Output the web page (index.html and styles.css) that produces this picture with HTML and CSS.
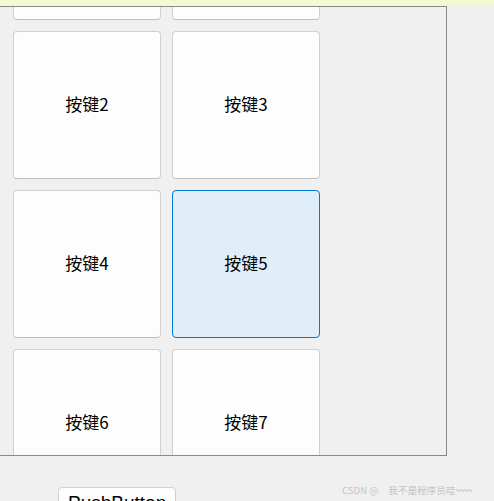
FILE: index.html
```html
<!DOCTYPE html>
<html lang="zh-CN">
<head>
<meta charset="utf-8">
<title>Buttons</title>
<link rel="stylesheet" href="styles.css">
</head>
<body>
<div class="topbar"></div>
<div class="frame">
  <div class="grid">
    <button class="key">按键0</button>
    <button class="key">按键1</button>
    <button class="key">按键2</button>
    <button class="key">按键3</button>
    <button class="key">按键4</button>
    <button class="key hover">按键5</button>
    <button class="key">按键6</button>
    <button class="key">按键7</button>
  </div>
</div>
<div class="footer">
  <button class="push">PushButton</button>
</div>
<div class="watermark"><span class="wm-site">CSDN @</span><span>我不是程序员哇<span class="wm-tilde">~~~~</span></span></div>
</body>
</html>
```
FILE: styles.css
```css
html, body {
  margin: 0;
  padding: 0;
}
body {
  width: 494px;
  height: 501px;
  overflow: hidden;
  background: #f0f0f0;
  position: relative;
  font-family: "Noto Sans CJK SC", "Noto Sans", sans-serif;
}
.topbar {
  height: 6px;
  background: #f4f8d3;
}
.frame {
  width: 446px;
  height: 448px;
  border-top: 1px solid #8a8a8a;
  border-right: 1px solid #8a8a8a;
  border-bottom: 1px solid #8a8a8a;
  overflow: hidden;
  box-sizing: content-box;
}
.grid {
  margin-top: -135px;
  padding-left: 13px;
  display: grid;
  grid-template-columns: 148px 148px;
  grid-auto-rows: 148px;
  gap: 11px;
}
.key {
  box-sizing: border-box;
  width: 148px;
  height: 148px;
  margin: 0;
  padding: 0 0 3px 0;
  background: #fdfdfd;
  border: 1px solid #d0d0d0;
  border-bottom-color: #bfbfbf;
  border-radius: 4px;
  font-family: "Noto Sans CJK SC", "Noto Sans", sans-serif;
  font-size: 17px;
  color: #000;
  display: flex;
  align-items: center;
  justify-content: center;
}
.key.hover {
  background: #e0eef9;
  border-color: #0078d4;
}
.footer {
  padding-top: 31px;
  padding-left: 58px;
}
.push {
  box-sizing: border-box;
  width: 118px;
  height: 32px;
  margin: 0;
  padding: 0 0 0 9px;
  text-align: left;
  background: #fdfdfd;
  border: 1px solid #d0d0d0;
  border-radius: 4px;
  font-family: "Liberation Sans", sans-serif;
  font-size: 19px;
  line-height: 26px;
  color: #000;
  display: block;
}
.watermark {
  position: absolute;
  left: 342px;
  top: 483px;
  display: flex;
  gap: 10px;
  font-family: "Noto Sans CJK SC", "Noto Sans", sans-serif;
  font-size: 9.6px;
  color: #c4c4c4;
  white-space: nowrap;
}
.wm-tilde {
  letter-spacing: -1.5px;
}
```
